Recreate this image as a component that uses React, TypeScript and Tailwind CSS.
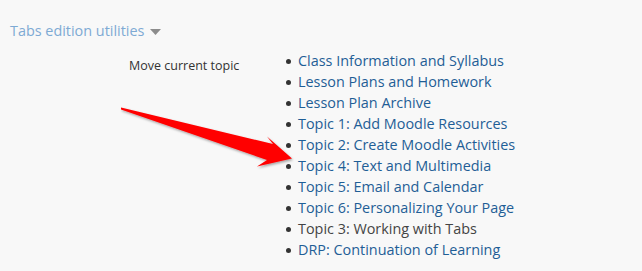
import React from "react";

const topics = [
  { t: "Class Information and Syllabus", link: true },
  { t: "Lesson Plans and Homework", link: true },
  { t: "Lesson Plan Archive", link: true },
  { t: "Topic 1: Add Moodle Resources", link: true },
  { t: "Topic 2: Create Moodle Activities", link: true },
  { t: "Topic 4: Text and Multimedia", link: true },
  { t: "Topic 5: Email and Calendar", link: true },
  { t: "Topic 6: Personalizing Your Page", link: true },
  { t: "Topic 3: Working with Tabs", link: false },
  { t: "DRP: Continuation of Learning", link: true },
];

export default function App() {
  return (
    <div
      className="relative w-[642px] h-[271px] overflow-hidden bg-[#f8f8f8]"
      style={{ fontFamily: '"Open Sans", "Noto Sans", sans-serif' }}
    >
      <div className="pt-[19px] pl-[10px] flex items-center gap-[6px]">
        <span className="text-[14.4px] leading-[24px] text-[#7eaad4]">Tabs edition utilities</span>
        <svg width="11" height="6" viewBox="0 0 11 6" className="mt-[2px]">
          <path d="M0 0 L11 0 L5.5 6 Z" fill="#8c8c8c" />
        </svg>
      </div>
      <div className="flex pt-[7px]">
        <div className="w-[286px] pl-[129px] text-[12.5px] leading-[21px] text-[#333] pt-[5px]">
          Move current topic
        </div>
        <ul className="text-[14.4px] leading-[21px]">
          {topics.map((it) => (
            <li key={it.t} className="flex items-center">
              <span className="w-[5px] h-[5px] rounded-full bg-[#333] mr-[7px] mt-[1px]" />
              <span className={it.link ? "text-[#1f5e96]" : "text-[#444]"}>{it.t}</span>
            </li>
          ))}
        </ul>
      </div>
      <svg
        className="absolute left-0 top-0 pointer-events-none"
        width="642"
        height="271"
        viewBox="0 0 642 271"
      >
        <defs>
          <filter id="sh" x="-10%" y="-20%" width="130%" height="150%">
            <feDropShadow dx="1" dy="1.5" stdDeviation="1.2" floodColor="#000" floodOpacity="0.35" />
          </filter>
        </defs>
        <path
          d="M121 107.5 L273 144 L267 136.5 L292 158.5 L257 166.5 L267 160 L121 109.5 Z"
          fill="#ff0000"
          filter="url(#sh)"
        />
      </svg>
    </div>
  );
}
